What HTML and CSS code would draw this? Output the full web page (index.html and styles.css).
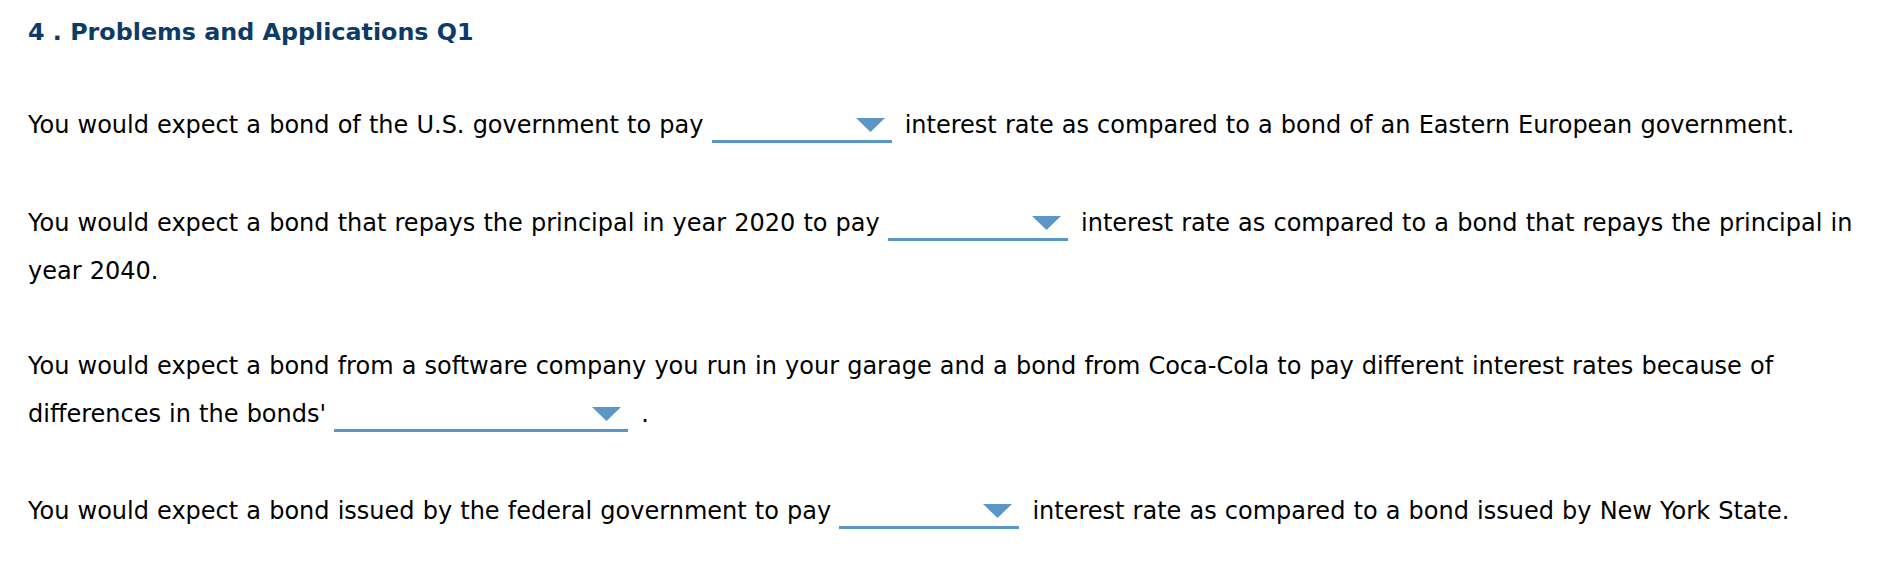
FILE: index.html
```html
<!DOCTYPE html>
<html lang="en">
<head>
<meta charset="utf-8">
<title>Problems and Applications Q1</title>
<link rel="stylesheet" href="styles.css">
</head>
<body>
<div class="page">
  <h1 class="title">4 . Problems and Applications Q1</h1>

  <p class="q q-first">You would expect a bond of the U.S. government to pay <span class="dd"><svg class="tri" width="29" height="14" viewBox="0 0 29 14"><polygon points="0,0 29,0 14.5,14"/></svg></span> interest rate as compared to a bond of an Eastern European government.</p>

  <p class="q q-second">You would expect a bond that repays the principal in year 2020 to pay <span class="dd"><svg class="tri" width="29" height="14" viewBox="0 0 29 14"><polygon points="0,0 29,0 14.5,14"/></svg></span> interest rate as compared to a bond that repays the principal in year 2040.</p>

  <p class="q q-third">You would expect a bond from a software company you run in your garage and a bond from Coca-Cola to pay different interest rates because of differences in the bonds' <span class="dd dd-wide"><svg class="tri" width="29" height="14" viewBox="0 0 29 14"><polygon points="0,0 29,0 14.5,14"/></svg></span> .</p>

  <p class="q q-fourth">You would expect a bond issued by the federal government to pay <span class="dd"><svg class="tri" width="29" height="14" viewBox="0 0 29 14"><polygon points="0,0 29,0 14.5,14"/></svg></span> interest rate as compared to a bond issued by New York State.</p>
</div>
</body>
</html>
```

FILE: styles.css
```css
html, body {
  margin: 0;
  padding: 0;
  background: #ffffff;
}

.page {
  padding: 17px 14px 0 28px;
  font-family: "DejaVu Sans", Verdana, sans-serif;
  color: #000000;
}

.title {
  margin: 0;
  font-size: 23.8px;
  line-height: 30px;
  font-weight: bold;
  color: #0c3b68;
}

.q {
  margin: 0;
  font-size: 24px;
  line-height: 48px;
  word-spacing: 0.5px;
}

.q-first {
  margin-top: 54px;
}

.q-second {
  margin-top: 50px;
}

.q-third {
  margin-top: 47px;
}

.q-fourth {
  margin-top: 49px;
}

.dd {
  display: inline-block;
  overflow: hidden;
  box-sizing: border-box;
  width: 180px;
  height: 25px;
  border-bottom: 3px solid #5a96c8;
  vertical-align: -10px;
  margin-right: 5px;
}

.dd-wide {
  width: 294px;
}

.tri {
  display: block;
  margin: 0 7px 0 auto;
  fill: #5a96c8;
}
```
